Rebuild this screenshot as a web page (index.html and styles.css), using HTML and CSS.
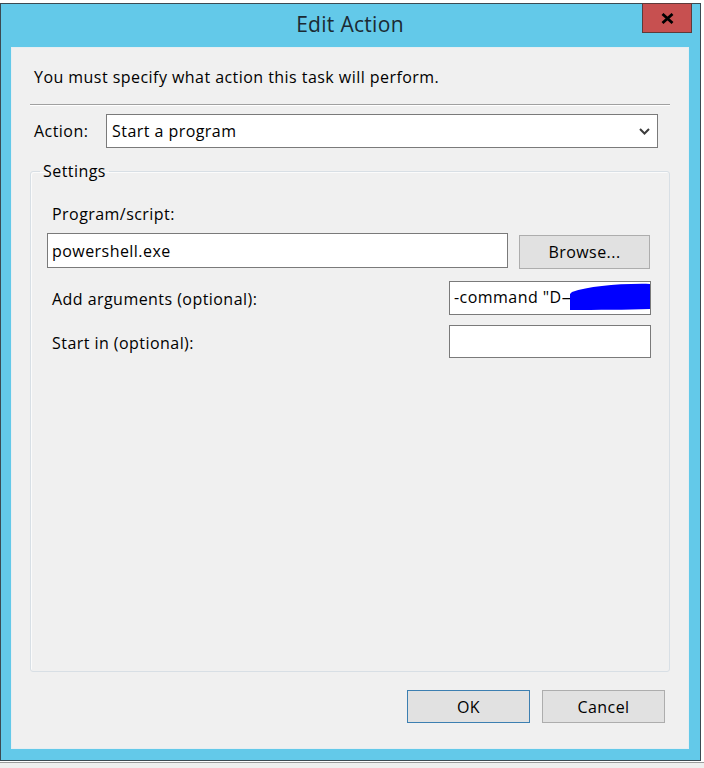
FILE: index.html
```html
<!DOCTYPE html>
<html lang="en">
<head>
<meta charset="UTF-8">
<title>Edit Action</title>
<link rel="stylesheet" href="styles.css">
</head>
<body>
<div class="window">
    <div class="titlebar">
        <span class="title">Edit Action</span>
        <button class="close-btn" type="button" aria-label="Close">
            <svg width="13" height="11" viewBox="0 0 13 11"><path d="M1.5 1 L11.5 10 M11.5 1 L1.5 10" stroke="#000" stroke-width="2.8"/></svg>
        </button>
    </div>
    <div class="content">
        <p class="intro">You must specify what action this task will perform.</p>
        <div class="separator"></div>
        <div class="action-row">
            <label class="action-label">Action:</label>
            <div class="select">
                <span>Start a program</span>
                <svg class="chevron" width="11" height="7" viewBox="0 0 11 7"><path d="M1 1 L5.5 5.5 L10 1" fill="none" stroke="#3c3c3c" stroke-width="2"/></svg>
            </div>
        </div>
        <fieldset class="settings">
            <legend>Settings</legend>
            <div class="settings-body">
                <div class="field-label">Program/script:</div>
                <div class="program-row">
                    <div class="textbox program-box">powershell.exe</div>
                    <button class="btn browse-btn" type="button">Browse...</button>
                </div>
                <div class="opt-row args-row">
                    <span class="opt-label">Add arguments (optional):</span>
                    <div class="textbox small-box args-box">
                        <span class="args-text">-command "D&#8212;&#8212;&#8212;&#8212;&#8212;"</span>
                        <svg class="redact" width="90" height="32" viewBox="0 0 90 32"><path d="M4 10 C 22 4, 52 1, 87 2 C 90 5, 89 13, 86 16 L 84 27 C 60 28, 30 28, 2 28 L 2 12 Z" fill="#0000ff"/></svg>
                    </div>
                </div>
                <div class="opt-row start-row">
                    <span class="opt-label">Start in (optional):</span>
                    <div class="textbox small-box"></div>
                </div>
            </div>
        </fieldset>
        <div class="buttons">
            <button class="btn ok-btn" type="button">OK</button>
            <button class="btn" type="button">Cancel</button>
        </div>
    </div>
</div>
<div class="desk-edge"></div>
</body>
</html>
```
FILE: styles.css
```css
* {
    box-sizing: border-box;
}

body {
    margin: 0;
    background: #ffffff;
    font-family: 'Open Sans', 'Noto Sans', sans-serif;
    font-size: 16px;
    letter-spacing: 0.45px;
    color: #000;
    overflow: hidden;
}

.window {
    position: relative;
    width: 701px;
    margin-top: 3px;
    padding: 0 11px 11px 10px;
    background: #63c9e9;
    border: 1px solid #3b4a52;
}

.titlebar {
    height: 43px;
    display: flex;
    align-items: center;
    justify-content: center;
}

.title {
    font-size: 21px;
    letter-spacing: 0.3px;
    color: #1b2a33;
    margin: 0 0 4px 0;
}

.close-btn {
    position: absolute;
    top: -1px;
    right: 8px;
    width: 50px;
    height: 30px;
    padding: 0;
    background: #c75050;
    border: 1px solid #5e3a3a;
    display: flex;
    align-items: center;
    justify-content: center;
}

.content {
    height: 702px;
    background: #f0f0f0;
    padding: 19px 18px 0 18px;
    display: flex;
    flex-direction: column;
    border: 1px solid #e6eef2;
}

.intro {
    margin: 0;
    padding-left: 4px;
    line-height: 20px;
}

.separator {
    margin-top: 17px;
    border-top: 1px solid #a0a0a0;
    border-bottom: 1px solid #ffffff;
}

.action-row {
    display: flex;
    align-items: center;
    margin-top: 8px;
}

.action-label {
    width: 76px;
    padding-left: 4px;
}

.select {
    width: 552px;
    height: 34px;
    background: #fff;
    border: 1px solid #7a7a7a;
    display: flex;
    align-items: center;
    justify-content: space-between;
    padding: 0 7px 0 5px;
}

.chevron {
    margin-top: 1px;
}

.settings {
    flex: 1;
    min-width: 0;
    margin: 13px 0 0;
    padding: 0;
    border: 1px solid #d8dfe5;
    border-radius: 3px;
    box-shadow: inset 1px 1px 0 #fbfbfb;
}

.settings legend {
    margin-left: 9px;
    padding: 0 3px;
    line-height: 20px;
}

.settings-body {
    padding: 0 18px 0 16px;
}

.field-label {
    margin-top: 23px;
    padding-left: 5px;
    line-height: 20px;
}

.program-row {
    display: flex;
    align-items: flex-start;
    margin-top: 9px;
}

.textbox {
    background: #fff;
    border: 1px solid #7a7a7a;
    display: flex;
    align-items: center;
    padding-left: 4px;
    white-space: nowrap;
    overflow: hidden;
}

.program-box {
    width: 461px;
    height: 35px;
}

.btn {
    font-family: inherit;
    font-size: 16px;
    letter-spacing: 0.45px;
    color: #000;
    background: #e1e1e1;
    border: 1px solid #adadad;
    width: 123px;
    height: 33px;
    padding: 0;
}

.browse-btn {
    width: 131px;
    height: 34px;
    margin: 2px 0 0 11px;
}

.opt-row {
    display: flex;
    align-items: center;
}

.args-row {
    margin-top: 12px;
}

.start-row {
    margin-top: 10px;
}

.opt-label {
    flex: 1;
    padding-left: 5px;
    margin-top: 2px;
}

.small-box {
    width: 202px;
    height: 34px;
}

.start-row .small-box {
    height: 33px;
}

.args-box {
    position: relative;
}

.args-text {
    margin-top: -2px;
}

.redact {
    position: absolute;
    left: 118px;
    top: 0;
}

.buttons {
    display: flex;
    justify-content: flex-end;
    gap: 12px;
    margin: 18px 0 25px;
    padding-right: 5px;
}

.ok-btn {
    border-color: #3c7fb1;
}

.desk-edge {
    margin-top: 1px;
    height: 10px;
    background: #efefef;
    border-top: 1px solid #9c9c9c;
}
```
